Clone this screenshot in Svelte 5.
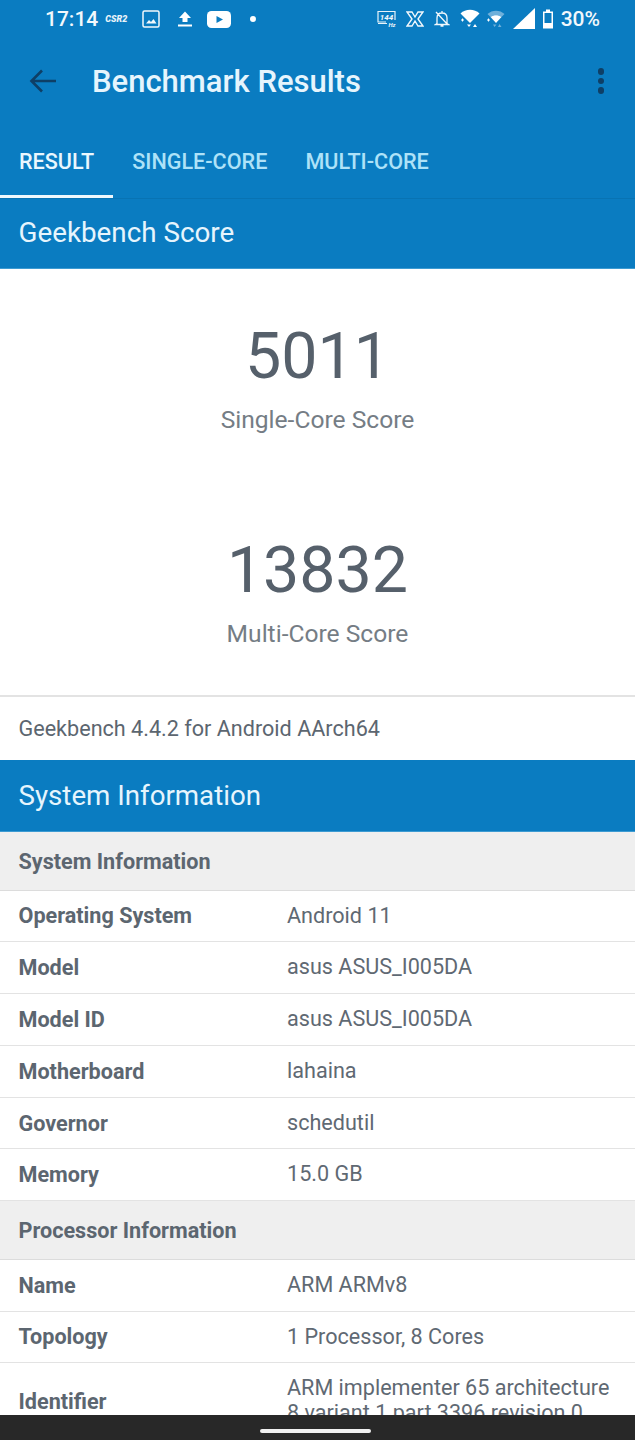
<script>
  const sys = [
    ['Operating System', 'Android 11'],
    ['Model', 'asus ASUS_I005DA'],
    ['Model ID', 'asus ASUS_I005DA'],
    ['Motherboard', 'lahaina'],
    ['Governor', 'schedutil'],
    ['Memory', '15.0 GB']
  ];
  const proc = [
    ['Name', 'ARM ARMv8'],
    ['Topology', '1 Processor, 8 Cores'],
    ['Identifier', 'ARM implementer 65 architecture 8 variant 1 part 3396 revision 0']
  ];
</script>

<div class="page">
  <header class="top">
    <div class="status">
      <div class="status-left">
        <span class="clock">17:14</span>
        <span class="csr">CSR2</span>
        <svg class="i-img" width="18" height="18" viewBox="0 0 18 18"><rect x="1" y="1" width="16" height="16" rx="1.5" fill="none" stroke="#f2f8fc" stroke-width="1.5"/><path d="M4 13.5l3-3.5 2 2 2.5-3 3 4.5z" fill="#f2f8fc"/></svg>
        <svg class="i-up" width="16" height="18" viewBox="0 0 16 18"><path d="M8 1.5L14 8H10.5v4h-5V8H2z" fill="#fff"/><rect x="1" y="14.5" width="14" height="2" fill="#fff"/></svg>
        <svg class="i-yt" width="24" height="17" viewBox="0 0 24 17"><rect width="24" height="17" rx="4.5" fill="#fff"/><path d="M9.5 5l6.5 3.5-6.5 3.500z" fill="#0a7cc1"/></svg>
        <span class="dot"></span>
      </div>
      <div class="status-right">
        <svg width="20" height="20" viewBox="0 0 20 20"><path d="M9 13H1V2.500h17V11" fill="none" stroke="#e8f3fa" stroke-width="1.200"/><path d="M1 14.500h9" stroke="#e8f3fa" stroke-width="1"/><text x="9.500" y="10.800" text-anchor="middle" class="hz">144</text><text x="15" y="18" text-anchor="middle" class="hz2">Hz</text></svg>
        <svg class="m9" width="18" height="16" viewBox="0 0 18 16"><path d="M1 1h5l3 5 3-5h5l-5 7 5 7h-5l-3-5-3 5H1l5-7z" fill="none" stroke="#f2f8fc" stroke-width="1.400"/></svg>
        <svg class="m10" width="16" height="18" viewBox="0 0 16 18"><path d="M3 13.500V8c0-3 2-5 5-5s5 2 5 5v5.500l1.500 1H1.500zM6.500 16h3M8 1v2M2 2l12 13" fill="none" stroke="#f2f8fc" stroke-width="1.300"/></svg>
        <svg class="m10" width="20" height="20" viewBox="0 0 20 20"><path d="M0.500 4.500C5.500 -0.500 14.500 -0.500 19.500 4.500L10 14z" fill="#fff"/><path d="M1 11h3M2.500 9.500v3" stroke="#fff"/><path d="M7 15.500h4l-2 2.500zM13 18h4l-2-3z" fill="#fff"/></svg>
        <svg class="m7" width="18" height="20" viewBox="0 0 18 20"><path d="M0.500 5C5 0.500 13 0.500 17.500 5l-3 3C11 5.500 7 5.500 3.500 8z" fill="#6fb0da"/><path d="M3.500 8C7 5.500 11 5.500 14.500 8L9 14z" fill="#fff"/><path d="M0 11h3M1.500 9.500v3" stroke="#fff"/><path d="M6 15.500h3.500l-2 2.500zM11 18h3.500l-2-3z" fill="#6fb0da"/></svg>
        <svg class="m8" width="22" height="22" viewBox="0 0 22 22"><path d="M0 21L22 0v21z" fill="#fff"/></svg>
        <svg class="m7" width="12" height="20" viewBox="0 0 12 20"><path d="M4 0.500h4v2h3v17H1v-17h3z" fill="#fff"/><rect x="2.500" y="4" width="7" height="10" fill="#0a7cc1"/></svg>
        <span class="pct">30%</span>
      </div>
    </div>

    <div class="appbar">
      <svg class="back" width="28" height="26" viewBox="0 0 28 26"><path d="M27 13H3M13 2.500L2.500 13 13 23.500" fill="none" stroke="#0e3f66" stroke-width="2.600"/></svg>
      <h1>Benchmark Results</h1>
      <div class="more"><i></i><i></i><i></i></div>
    </div>

    <nav class="tabs">
      <span class="tab active">RESULT</span>
      <span class="tab">SINGLE-CORE</span>
      <span class="tab">MULTI-CORE</span>
    </nav>
  </header>

  <h2 class="section">Geekbench Score</h2>

  <section class="scores">
    <div class="score first">
      <div class="num">5011</div>
      <div class="lbl">Single-Core Score</div>
    </div>
    <div class="score second">
      <div class="num">13832</div>
      <div class="lbl">Multi-Core Score</div>
    </div>
  </section>

  <div class="version">Geekbench 4.4.2 for Android AArch64</div>

  <h2 class="section tall">System Information</h2>

  <div class="group">System Information</div>
  {#each sys as [k, v]}
    <div class="row"><div class="k">{k}</div><div class="v">{v}</div></div>
  {/each}
  <div class="group">Processor Information</div>
  {#each proc as [k, v]}
    <div class="row"><div class="k">{k}</div><div class="v">{v}</div></div>
  {/each}

  <div class="navbar"><span></span></div>
</div>

<style>
  :global(body) { margin: 0; background: #fff; }
  .page {
    position: relative;
    width: 635px;
    height: 1440px;
    overflow: hidden;
    font-family: Roboto, "Liberation Sans", sans-serif;
    color: #5c6670;
    background: #fff;
  }
  .top { background: #0a7cc1; height: 198px; display: flex; flex-direction: column; }
  .status {
    height: 38px;
    display: flex;
    justify-content: space-between;
    align-items: center;
    padding: 0 35px 0 45px;
    color: #fff;
  }
  .status-left, .status-right { display: flex; align-items: center; }
  .clock { font-size: 21px; font-weight: 500; color: #f2f8fc; }
  .csr { font-size: 9px; font-weight: 900; font-style: italic; color: #e8f3fa; margin-left: 7px; }
  .i-img { margin-left: 15px; }
  .i-up { margin-left: 17px; }
  .i-yt { margin-left: 14px; }
  .m7 { margin-left: 7px; }
  .m8 { margin-left: 8px; }
  .m9 { margin-left: 9px; }
  .m10 { margin-left: 10px; }
  .dot { width: 6px; height: 6px; border-radius: 50%; background: #fff; margin-left: 19px; }
  .hz { font-size: 8px; font-weight: 700; font-style: italic; fill: #f2f8fc; }
  .hz2 { font-size: 6px; font-weight: 700; font-style: italic; fill: #f2f8fc; }
  .pct { font-size: 21px; font-weight: 500; color: #f2f8fc; margin-left: 7px; }
  .appbar {
    height: 86px;
    display: flex;
    align-items: center;
    padding: 0 31px 0 29px;
  }
  .back { flex: none; }
  h1 {
    margin: 0 0 0 35px;
    font-size: 31px;
    font-weight: 500;
    color: #e6f5fd;
    flex: 1;
  }
  .more { display: flex; flex-direction: column; gap: 3px; }
  .more i { width: 6.500px; height: 6.500px; border-radius: 50%; background: #0e3f66; display: block; }
  .tabs { flex: 1; display: flex; align-items: stretch; box-shadow: 0 1px 0 #0873b3; }
  .tab {
    display: flex;
    align-items: center;
    justify-content: center;
    font-size: 21.600px;
    font-weight: 500;
    color: #aee2f8;
    padding: 0 19px;
    height: 74px;
    box-sizing: border-box;
  }
  .tab.active { color: #e9f7fe; border-bottom: 3px solid #f0f8fd; padding-top: 3px; }
  .section {
    margin: 0;
    height: 71px;
    box-sizing: border-box;
    display: flex;
    align-items: center;
    padding: 0 18.500px 2px;
    background: #0a7cc1;
    color: #e6f5fd;
    font-size: 27.800px;
    font-weight: 400;
    border-bottom: 1px solid #3d9bd2;
  }
  .section.tall { height: 72px; font-size: 27.700px; padding-bottom: 0; }
  .scores { height: 428px; border-bottom: 2px solid #e3e3e3; box-sizing: border-box; text-align: center; }
  .score { display: flex; flex-direction: column; align-items: center; }
  .first { padding-top: 48px; }
  .second { padding-top: 96.500px; }
  .num { font-size: 64.500px; line-height: 78px; font-weight: 400; color: #56606b; }
  .lbl { font-size: 24.600px; line-height: 28px; color: #757d85; margin-top: 11px; }
  .version {
    height: 63px;
    display: flex;
    align-items: center;
    padding: 0 18.500px;
    font-size: 21.600px;
    color: #5c6670;
  }
  .group {
    height: 58.500px;
    box-sizing: border-box;
    display: flex;
    align-items: center;
    padding: 1px 18.500px 0;
    background: #efefef;
    font-size: 21.600px;
    font-weight: 700;
    color: #5c6670;
    border-bottom: 1px solid #dcdcdc;
  }
  .row {
    box-sizing: border-box;
    display: flex;
    align-items: center;
    border-bottom: 1px solid #e3e3e3;
    font-size: 21.600px;
    padding: 0 18.500px;
  }
  .k { width: 268.500px; flex: none; font-weight: 700; color: #5c6670; }
  .v { flex: 1; line-height: 24.800px; color: #5f6973; padding: 13px 0; }
  .navbar {
    position: absolute;
    left: 0; right: 0; bottom: 0;
    height: 25px;
    background: #282828;
    display: flex;
    justify-content: center;
    padding: 14px 4px 0 0;
    box-sizing: border-box;
  }
  .navbar span { width: 111px; height: 3.500px; border-radius: 2px; background: #f0f0f0; }
</style>
